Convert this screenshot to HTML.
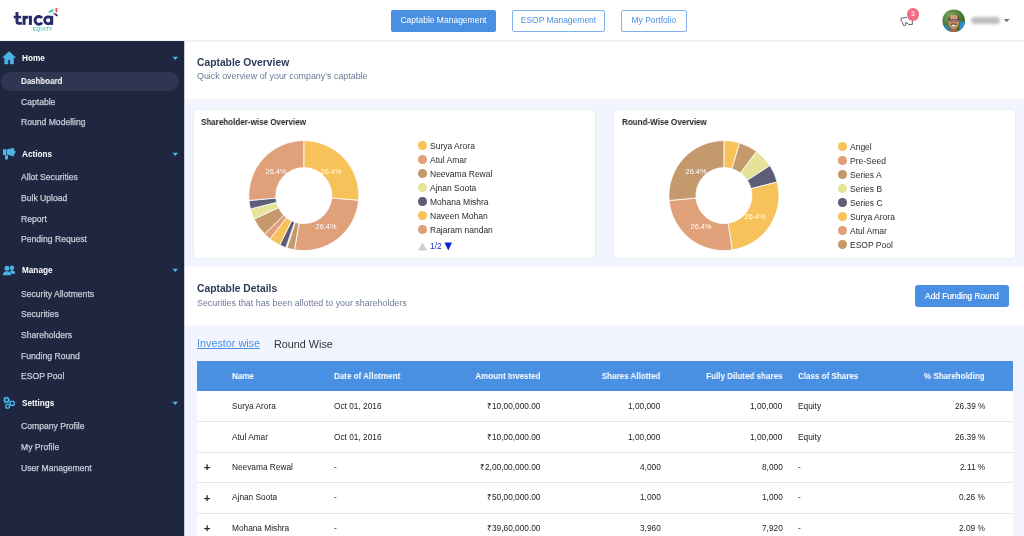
<!DOCTYPE html>
<html><head><meta charset="utf-8"><style>
html,body{margin:0;padding:0;width:1024px;height:536px;overflow:hidden;background:#fff;font-family:"Liberation Sans", sans-serif;}
.t{position:absolute;white-space:nowrap;line-height:1em;font-family:"Liberation Sans", sans-serif;will-change:transform;}
.btn{position:absolute;will-change:transform;border-radius:2px;font-size:8.5px;text-align:center;display:flex;align-items:center;justify-content:center;font-family:"Liberation Sans", sans-serif;}
</style></head><body>
<div style="position:absolute;left:0px;top:0px;width:1024px;height:40px;background:#fff;"></div><div style="position:absolute;left:0px;top:40px;width:1024px;height:2px;background:#f1f1f2;"></div><svg style="position:absolute;left:0;top:0" width="70" height="40"><g fill="none" stroke="#282a6c" stroke-width="3"><path d="M16.95,12.1 L16.95,21.6 Q16.95,23.4 18.9,23.4 L21.9,23.4" stroke-width="2.9"/><path d="M13.7,17.1 L21.1,17.1" stroke-width="2.6"/><path d="M24.05,24.9 L24.05,15.8"/><path d="M24.05,20 Q24.2,17.2 27.3,17.2 L28.4,17.2" stroke-width="2.7"/><path d="M30.4,15.8 L30.4,24.9"/><path d="M42.0,18.0 A3.9,3.9 0 1 0 42.0,22.7" stroke-width="2.9"/><circle cx="48.2" cy="20.35" r="3.55" stroke-width="2.8"/><path d="M51.75,15.8 L51.75,24.9" stroke-width="2.9"/></g><line x1="49.6" y1="11.9" x2="52.6" y2="10.3" stroke="#3fc4b3" stroke-width="2.1" stroke-linecap="round"/><line x1="56.4" y1="8.7" x2="56.4" y2="11.4" stroke="#ef5b48" stroke-width="2" stroke-linecap="round"/><line x1="54.9" y1="14.0" x2="56.7" y2="15.3" stroke="#282a6c" stroke-width="2" stroke-linecap="round"/><line x1="53.6" y1="13.3" x2="54.9" y2="14.0" stroke="#8a8cb0" stroke-width="1.6" stroke-linecap="round"/></svg><div class="t" style="left:33px;top:28.2px;font-size:4.6px;line-height:4.6px;font-weight:bold;color:#45c6b8;letter-spacing:0.45px">EQUITY</div><div class="btn" style="left:391px;top:9.7px;width:105px;height:22px;background:#4a90e2;color:#fff;border:none;padding-bottom:1.4px;box-sizing:border-box">Captable Management</div><div class="btn" style="left:512px;top:9.7px;width:93px;height:22px;background:#fff;color:#4a90e2;border:1px solid #80b1ec;padding-bottom:1.4px;box-sizing:border-box">ESOP Management</div><div class="btn" style="left:620.5px;top:9.5px;width:65.8px;height:22.2px;background:#fff;color:#4a90e2;border:1px solid #80b1ec;padding-bottom:1.4px;box-sizing:border-box">My Portfolio</div><svg style="position:absolute;left:898px;top:12px" width="22" height="18" viewBox="0 0 22 18"><path d="M3.2,9.8 L3.2,6.2 L9,5.3" fill="none" stroke="#50556b" stroke-width="0.9"/><path d="M4.4,9.8 L5.3,13.4 Q6.3,14.4 7.4,13.4 L7.7,10.4 L11,12.5 L14.3,12.6 L14.4,8.2" fill="none" stroke="#50556b" stroke-width="0.9" stroke-linejoin="round"/></svg><div style="position:absolute;left:906.6px;top:8.0px;width:12.8px;height:12.8px;border-radius:50%;background:#f06c87;color:#fff;font-size:6.8px;line-height:12.8px;text-align:center">3</div><svg style="position:absolute;left:942px;top:9px" width="24" height="24" viewBox="0 0 24 24"><defs><clipPath id="av"><circle cx="11.7" cy="11.75" r="11.3"/></clipPath><radialGradient id="gr" cx="0.35" cy="0.3" r="0.8"><stop offset="0" stop-color="#7aa85a"/><stop offset="0.5" stop-color="#4d7d38"/><stop offset="1" stop-color="#2f5a25"/></radialGradient></defs><g clip-path="url(#av)"><rect width="24" height="24" fill="url(#gr)"/><path d="M18,13 L24,12 L24,24 L17,24 Z" fill="#2e92c8"/><path d="M0,17 L6,16 L8,24 L0,24 Z" fill="#2a85b8"/><path d="M7,21 Q11.5,19 16,21 L17,24 L6,24 Z" fill="#a0684a"/><ellipse cx="11.7" cy="13" rx="5.4" ry="7.4" fill="#c48a68"/><path d="M6.4,12 Q6.2,8 7.6,6.8 L8,11 Z" fill="#3a2e28"/><path d="M17,12 Q17.2,8 15.8,6.8 L15.4,11 Z" fill="#3a2e28"/><ellipse cx="11.7" cy="9" rx="4" ry="3" fill="#d49c7a"/><path d="M7.5,10.6 L16,10.6" stroke="#5a4a5a" stroke-width="0.8"/><circle cx="9.6" cy="11.3" r="1.3" fill="#b08090" stroke="#4a3a4a" stroke-width="0.5"/><circle cx="13.9" cy="11.3" r="1.3" fill="#b08090" stroke="#4a3a4a" stroke-width="0.5"/><path d="M8.8,15.2 Q11.7,13.8 14.6,15.2 L14,16 Q11.7,15.2 9.4,16 Z" fill="#3a2a22"/><ellipse cx="11.7" cy="16.4" rx="2" ry="0.9" fill="#f2ece6"/></g></svg><div style="position:absolute;left:970.5px;top:16.5px;width:29.5px;height:7px;border-radius:4px;background:#bdbdbd;filter:blur(1.7px)"></div><svg style="position:absolute;left:1003px;top:18px" width="8" height="5"><path d="M0.8,1 L6.6,1 L3.7,4.2 Z" fill="#777"/></svg><div style="position:absolute;left:0px;top:41px;width:184px;height:495px;background:#1f2640;"></div><div style="position:absolute;left:184px;top:41px;width:1px;height:495px;background:#c9ccd6;"></div><div style="position:absolute;left:1px;top:71.5px;width:178px;height:19.5px;background:#2f3651;border-radius:10px;"></div><div class="t" style="left:21.5px;top:55.06px;font-size:8.2px;color:#fff;font-weight:bold;">Home</div><svg style="position:absolute;left:171px;top:55.5px" width="8" height="5"><path d="M1.3,0.8 L7.1,0.8 L4.2,3.9 Z" fill="#4ab6e8"/></svg><div class="t" style="left:20.8px;top:77.30px;font-size:8.5px;color:#fff;font-weight:bold;transform:scaleX(0.93);transform-origin:0 0;">Dashboard</div><div class="t" style="left:20.5px;top:98.22px;font-size:8.6px;color:#c8ccd6;font-weight:normal;-webkit-text-stroke:0.25px #c8ccd6;">Captable</div><div class="t" style="left:20.5px;top:118.47px;font-size:8.6px;color:#c8ccd6;font-weight:normal;-webkit-text-stroke:0.25px #c8ccd6;">Round Modelling</div><div class="t" style="left:21.5px;top:150.76px;font-size:8.2px;color:#fff;font-weight:bold;">Actions</div><svg style="position:absolute;left:171px;top:151.5px" width="8" height="5"><path d="M1.3,0.8 L7.1,0.8 L4.2,3.9 Z" fill="#4ab6e8"/></svg><div class="t" style="left:20.5px;top:172.72px;font-size:8.6px;color:#c8ccd6;font-weight:normal;-webkit-text-stroke:0.25px #c8ccd6;">Allot Securities</div><div class="t" style="left:20.5px;top:193.72px;font-size:8.6px;color:#c8ccd6;font-weight:normal;-webkit-text-stroke:0.25px #c8ccd6;">Bulk Upload</div><div class="t" style="left:20.5px;top:214.72px;font-size:8.6px;color:#c8ccd6;font-weight:normal;-webkit-text-stroke:0.25px #c8ccd6;">Report</div><div class="t" style="left:20.5px;top:235.22px;font-size:8.6px;color:#c8ccd6;font-weight:normal;-webkit-text-stroke:0.25px #c8ccd6;">Pending Request</div><div class="t" style="left:21.5px;top:266.56px;font-size:8.2px;color:#fff;font-weight:bold;">Manage</div><svg style="position:absolute;left:171px;top:268px" width="8" height="5"><path d="M1.3,0.8 L7.1,0.8 L4.2,3.9 Z" fill="#4ab6e8"/></svg><div class="t" style="left:20.5px;top:289.72px;font-size:8.6px;color:#c8ccd6;font-weight:normal;-webkit-text-stroke:0.25px #c8ccd6;">Security Allotments</div><div class="t" style="left:20.5px;top:310.42px;font-size:8.6px;color:#c8ccd6;font-weight:normal;-webkit-text-stroke:0.25px #c8ccd6;">Securities</div><div class="t" style="left:20.5px;top:330.92px;font-size:8.6px;color:#c8ccd6;font-weight:normal;-webkit-text-stroke:0.25px #c8ccd6;">Shareholders</div><div class="t" style="left:20.5px;top:351.92px;font-size:8.6px;color:#c8ccd6;font-weight:normal;-webkit-text-stroke:0.25px #c8ccd6;">Funding Round</div><div class="t" style="left:20.5px;top:372.32px;font-size:8.6px;color:#c8ccd6;font-weight:normal;-webkit-text-stroke:0.25px #c8ccd6;">ESOP Pool</div><div class="t" style="left:21.5px;top:399.76px;font-size:8.2px;color:#fff;font-weight:bold;">Settings</div><svg style="position:absolute;left:171px;top:400.5px" width="8" height="5"><path d="M1.3,0.8 L7.1,0.8 L4.2,3.9 Z" fill="#4ab6e8"/></svg><div class="t" style="left:20.5px;top:422.22px;font-size:8.6px;color:#c8ccd6;font-weight:normal;-webkit-text-stroke:0.25px #c8ccd6;">Company Profile</div><div class="t" style="left:20.5px;top:442.52px;font-size:8.6px;color:#c8ccd6;font-weight:normal;-webkit-text-stroke:0.25px #c8ccd6;">My Profile</div><div class="t" style="left:20.5px;top:463.52px;font-size:8.6px;color:#c8ccd6;font-weight:normal;-webkit-text-stroke:0.25px #c8ccd6;">User Management</div><svg style="position:absolute;left:0;top:45px" width="20" height="22" viewBox="0 0 20 22"><path d="M9.1,6.6 L2.6,12.6 L4.7,12.6 L4.7,18.9 L7.9,18.9 L7.9,14.7 L10.3,14.7 L10.3,18.9 L13.5,18.9 L13.5,12.6 L15.6,12.6 Z" fill="#4ab6e8" stroke="#4ab6e8" stroke-width="0.6" stroke-linejoin="round"/></svg><svg style="position:absolute;left:0;top:142px" width="20" height="22" viewBox="0 0 20 22"><path d="M3,7.2 L6,7.2 L6,13 L3,13 Z" fill="#4ab6e8"/><path d="M6.5,7.6 L14,5.8 L14,14.5 L6.5,12.6 Z" fill="#4ab6e8"/><rect x="14" y="8.6" width="1.4" height="3" rx="0.7" fill="#4ab6e8"/><path d="M5,13.2 L8,13.2 L8,17 Q6.5,18.4 5,17 Z" fill="#4ab6e8"/></svg><svg style="position:absolute;left:0;top:258px" width="20" height="22" viewBox="0 0 20 22"><circle cx="7" cy="10.3" r="2.5" fill="#4ab6e8"/><circle cx="12" cy="9.8" r="2.2" fill="#4ab6e8"/><path d="M2.8,17.3 Q3,13.3 7,13.3 Q11,13.3 11.2,17.3 Z" fill="#4ab6e8"/><path d="M11.2,15.8 L15.3,15.8 Q15,12.3 12,12.3 Q10.5,12.3 10,13" fill="#4ab6e8"/></svg><svg style="position:absolute;left:0;top:390px" width="20" height="22" viewBox="0 0 20 22"><circle cx="6.6" cy="10" r="2.6" fill="none" stroke="#4ab6e8" stroke-width="1.6" stroke-dasharray="1.2 0.6"/><circle cx="6.6" cy="10" r="1.9" fill="none" stroke="#4ab6e8" stroke-width="1.3"/><circle cx="12.2" cy="13.3" r="2.2" fill="none" stroke="#4ab6e8" stroke-width="1.4"/><circle cx="7.6" cy="16.3" r="1.9" fill="none" stroke="#4ab6e8" stroke-width="1.3"/></svg><div style="position:absolute;left:185px;top:42px;width:839px;height:494px;background:#f2f5fd;"></div><div style="position:absolute;left:185px;top:42px;width:839px;height:57px;background:#fff;"></div><div class="t" style="left:197px;top:58.18px;font-size:10.3px;color:#2c3d5b;font-weight:bold;">Captable Overview</div><div class="t" style="left:197px;top:72.47px;font-size:8.9px;color:#6c7a97;font-weight:normal;">Quick overview of your company&#8217;s captable</div><div style="position:absolute;left:193.5px;top:109.5px;width:401.5px;height:148px;background:#fff;border-radius:3px;box-shadow:0 0 2px rgba(200,205,220,0.6);"></div><div style="position:absolute;left:614px;top:109.5px;width:400.5px;height:148px;background:#fff;border-radius:3px;box-shadow:0 0 2px rgba(200,205,220,0.6);"></div><div class="t" style="left:201px;top:118.40px;font-size:8.5px;color:#262626;font-weight:bold;transform:scaleX(0.945);transform-origin:0 0;">Shareholder-wise Overview</div><div class="t" style="left:621.5px;top:118.40px;font-size:8.5px;color:#262626;font-weight:bold;transform:scaleX(0.945);transform-origin:0 0;">Round-Wise Overview</div><svg style="position:absolute;left:0;top:0" width="1024" height="536"><path d="M303.80,140.60 A55,55 0 0 1 358.59,200.39 L331.69,198.04 A28,28 0 0 0 303.80,167.60 Z" fill="#f7c25a" stroke="#fff" stroke-width="0.8"/><path d="M358.59,200.39 A55,55 0 0 1 294.44,249.80 L299.03,223.19 A28,28 0 0 0 331.69,198.04 Z" fill="#e0a07a" stroke="#fff" stroke-width="0.8"/><path d="M294.44,249.80 A55,55 0 0 1 286.90,247.94 L295.19,222.24 A28,28 0 0 0 299.03,223.19 Z" fill="#c49a6c" stroke="#fff" stroke-width="0.8"/><path d="M286.90,247.94 A55,55 0 0 1 285.89,247.60 L294.68,222.07 A28,28 0 0 0 295.19,222.24 Z" fill="#e5e39a" stroke="#fff" stroke-width="0.8"/><path d="M285.89,247.60 A55,55 0 0 1 279.78,245.08 L291.57,220.79 A28,28 0 0 0 294.68,222.07 Z" fill="#5e5d78" stroke="#fff" stroke-width="0.8"/><path d="M279.78,245.08 A55,55 0 0 1 269.94,238.94 L286.56,217.66 A28,28 0 0 0 291.57,220.79 Z" fill="#f7c25a" stroke="#fff" stroke-width="0.8"/><path d="M269.94,238.94 A55,55 0 0 1 264.50,234.08 L283.79,215.19 A28,28 0 0 0 286.56,217.66 Z" fill="#e0a07a" stroke="#fff" stroke-width="0.8"/><path d="M264.50,234.08 A55,55 0 0 1 254.08,219.10 L278.49,207.57 A28,28 0 0 0 283.79,215.19 Z" fill="#c49a6c" stroke="#fff" stroke-width="0.8"/><path d="M254.08,219.10 A55,55 0 0 1 250.43,208.91 L276.63,202.37 A28,28 0 0 0 278.49,207.57 Z" fill="#e5e39a" stroke="#fff" stroke-width="0.8"/><path d="M250.43,208.91 A55,55 0 0 1 249.02,200.49 L275.91,198.09 A28,28 0 0 0 276.63,202.37 Z" fill="#5e5d78" stroke="#fff" stroke-width="0.8"/><path d="M249.02,200.49 A55,55 0 0 1 303.80,140.60 L303.80,167.60 A28,28 0 0 0 275.91,198.09 Z" fill="#e0a07a" stroke="#fff" stroke-width="0.8"/><text x="331" y="174" fill="#fff" font-size="7.4" text-anchor="middle" font-family="Liberation Sans">26.4%</text><text x="326" y="229" fill="#fff" font-size="7.4" text-anchor="middle" font-family="Liberation Sans">26.4%</text><text x="276" y="174" fill="#fff" font-size="7.4" text-anchor="middle" font-family="Liberation Sans">26.4%</text><path d="M723.90,140.60 A55,55 0 0 1 739.61,142.89 L731.90,168.77 A28,28 0 0 0 723.90,167.60 Z" fill="#f7c25a" stroke="#fff" stroke-width="0.8"/><path d="M739.61,142.89 A55,55 0 0 1 756.62,151.39 L740.56,173.09 A28,28 0 0 0 731.90,168.77 Z" fill="#c49a6c" stroke="#fff" stroke-width="0.8"/><path d="M756.62,151.39 A55,55 0 0 1 769.97,165.56 L747.36,180.31 A28,28 0 0 0 740.56,173.09 Z" fill="#e5e39a" stroke="#fff" stroke-width="0.8"/><path d="M769.97,165.56 A55,55 0 0 1 777.20,182.02 L751.03,188.68 A28,28 0 0 0 747.36,180.31 Z" fill="#5e5d78" stroke="#fff" stroke-width="0.8"/><path d="M777.20,182.02 A55,55 0 0 1 732.31,249.95 L728.18,223.27 A28,28 0 0 0 751.03,188.68 Z" fill="#f7c25a" stroke="#fff" stroke-width="0.8"/><path d="M732.31,249.95 A55,55 0 0 1 669.12,200.49 L696.01,198.09 A28,28 0 0 0 728.18,223.27 Z" fill="#e0a07a" stroke="#fff" stroke-width="0.8"/><path d="M669.12,200.49 A55,55 0 0 1 723.90,140.60 L723.90,167.60 A28,28 0 0 0 696.01,198.09 Z" fill="#c49a6c" stroke="#fff" stroke-width="0.8"/><text x="696" y="174" fill="#fff" font-size="7.4" text-anchor="middle" font-family="Liberation Sans">26.4%</text><text x="755" y="219" fill="#fff" font-size="7.4" text-anchor="middle" font-family="Liberation Sans">26.4%</text><text x="701" y="229" fill="#fff" font-size="7.4" text-anchor="middle" font-family="Liberation Sans">26.4%</text></svg><div style="position:absolute;left:418.05px;top:141.25px;width:8.5px;height:8.5px;border-radius:50%;background:#f7c25a"></div><div class="t" style="left:430.0px;top:142.00px;font-size:8.5px;color:#2b2b2b;font-weight:normal;">Surya Arora</div><div style="position:absolute;left:418.05px;top:155.25px;width:8.5px;height:8.5px;border-radius:50%;background:#e0a07a"></div><div class="t" style="left:430.0px;top:156.00px;font-size:8.5px;color:#2b2b2b;font-weight:normal;">Atul Amar</div><div style="position:absolute;left:418.05px;top:169.25px;width:8.5px;height:8.5px;border-radius:50%;background:#c49a6c"></div><div class="t" style="left:430.0px;top:170.00px;font-size:8.5px;color:#2b2b2b;font-weight:normal;">Neevama Rewal</div><div style="position:absolute;left:418.05px;top:183.25px;width:8.5px;height:8.5px;border-radius:50%;background:#e5e39a"></div><div class="t" style="left:430.0px;top:184.00px;font-size:8.5px;color:#2b2b2b;font-weight:normal;">Ajnan Soota</div><div style="position:absolute;left:418.05px;top:197.25px;width:8.5px;height:8.5px;border-radius:50%;background:#5e5d78"></div><div class="t" style="left:430.0px;top:198.00px;font-size:8.5px;color:#2b2b2b;font-weight:normal;">Mohana Mishra</div><div style="position:absolute;left:418.05px;top:211.25px;width:8.5px;height:8.5px;border-radius:50%;background:#f7c25a"></div><div class="t" style="left:430.0px;top:212.00px;font-size:8.5px;color:#2b2b2b;font-weight:normal;">Naveen Mohan</div><div style="position:absolute;left:418.05px;top:225.25px;width:8.5px;height:8.5px;border-radius:50%;background:#e0a07a"></div><div class="t" style="left:430.0px;top:226.00px;font-size:8.5px;color:#2b2b2b;font-weight:normal;">Rajaram nandan</div><div style="position:absolute;left:838.05px;top:142.25px;width:8.5px;height:8.5px;border-radius:50%;background:#f7c25a"></div><div class="t" style="left:850.0px;top:143.00px;font-size:8.5px;color:#2b2b2b;font-weight:normal;">Angel</div><div style="position:absolute;left:838.05px;top:156.25px;width:8.5px;height:8.5px;border-radius:50%;background:#e0a07a"></div><div class="t" style="left:850.0px;top:157.00px;font-size:8.5px;color:#2b2b2b;font-weight:normal;">Pre-Seed</div><div style="position:absolute;left:838.05px;top:170.25px;width:8.5px;height:8.5px;border-radius:50%;background:#c49a6c"></div><div class="t" style="left:850.0px;top:171.00px;font-size:8.5px;color:#2b2b2b;font-weight:normal;">Series A</div><div style="position:absolute;left:838.05px;top:184.25px;width:8.5px;height:8.5px;border-radius:50%;background:#e5e39a"></div><div class="t" style="left:850.0px;top:185.00px;font-size:8.5px;color:#2b2b2b;font-weight:normal;">Series B</div><div style="position:absolute;left:838.05px;top:198.25px;width:8.5px;height:8.5px;border-radius:50%;background:#5e5d78"></div><div class="t" style="left:850.0px;top:199.00px;font-size:8.5px;color:#2b2b2b;font-weight:normal;">Series C</div><div style="position:absolute;left:838.05px;top:212.25px;width:8.5px;height:8.5px;border-radius:50%;background:#f7c25a"></div><div class="t" style="left:850.0px;top:213.00px;font-size:8.5px;color:#2b2b2b;font-weight:normal;">Surya Arora</div><div style="position:absolute;left:838.05px;top:226.25px;width:8.5px;height:8.5px;border-radius:50%;background:#e0a07a"></div><div class="t" style="left:850.0px;top:227.00px;font-size:8.5px;color:#2b2b2b;font-weight:normal;">Atul Amar</div><div style="position:absolute;left:838.05px;top:240.25px;width:8.5px;height:8.5px;border-radius:50%;background:#c49a6c"></div><div class="t" style="left:850.0px;top:241.00px;font-size:8.5px;color:#2b2b2b;font-weight:normal;">ESOP Pool</div><svg style="position:absolute;left:416px;top:240px" width="40" height="12"><path d="M2,10.5 L6.5,2.5 L11,10.5 Z" fill="#cfcfcf"/><path d="M28.5,2.5 L36,2.5 L32.25,10.5 Z" fill="#0a1fd0"/></svg><div class="t" style="left:430px;top:242.30px;font-size:8.5px;color:#1a30d0;font-weight:normal;">1/2</div><div style="position:absolute;left:185px;top:267px;width:839px;height:58px;background:#fff;"></div><div class="t" style="left:197px;top:284.38px;font-size:10.3px;color:#2c3d5b;font-weight:bold;">Captable Details</div><div class="t" style="left:197px;top:299.27px;font-size:8.9px;color:#6c7a97;font-weight:normal;">Securities that has been allotted to your shareholders</div><div class="btn" style="left:915px;top:285px;width:94px;height:22px;background:#4a90e2;color:#fff;border:none;border-radius:3px;font-size:8.3px;-webkit-text-stroke:0.2px #fff">Add Funding Round</div><div class="t" style="left:197px;top:338.36px;font-size:10.8px;color:#4a90e2;font-weight:normal;text-decoration:underline;text-underline-offset:0.6px;text-decoration-thickness:0.8px;">Investor wise</div><div class="t" style="left:273.5px;top:338.86px;font-size:10.8px;color:#333;font-weight:normal;">Round Wise</div><div style="position:absolute;left:197px;top:361px;width:816px;height:30px;background:#4a90e2;"></div><div class="t" style="left:231.5px;top:371.94px;font-size:8.7px;color:#fff;font-weight:bold;transform:scaleX(0.925);transform-origin:0 0;">Name</div><div class="t" style="left:334.3px;top:371.94px;font-size:8.7px;color:#fff;font-weight:bold;transform:scaleX(0.925);transform-origin:0 0;">Date of Allotment</div><div class="t" style="right:483.70000000000005px;top:371.94px;font-size:8.7px;color:#fff;font-weight:bold;transform:scaleX(0.925);transform-origin:100% 0;">Amount Invested</div><div class="t" style="right:363.5px;top:371.94px;font-size:8.7px;color:#fff;font-weight:bold;transform:scaleX(0.925);transform-origin:100% 0;">Shares Allotted</div><div class="t" style="right:241.39999999999998px;top:371.94px;font-size:8.7px;color:#fff;font-weight:bold;transform:scaleX(0.925);transform-origin:100% 0;">Fully Diluted shares</div><div class="t" style="left:798px;top:371.94px;font-size:8.7px;color:#fff;font-weight:bold;transform:scaleX(0.925);transform-origin:0 0;">Class of Shares</div><div class="t" style="right:38.89999999999998px;top:371.94px;font-size:8.7px;color:#fff;font-weight:bold;transform:scaleX(0.925);transform-origin:100% 0;">% Shareholding</div><div style="position:absolute;left:197px;top:391px;width:816px;height:30px;background:#fff;"></div><div class="t" style="left:231.5px;top:402.07px;font-size:8.3px;color:#222;font-weight:normal;">Surya Arora</div><div class="t" style="left:334.3px;top:402.07px;font-size:8.3px;color:#222;font-weight:normal;">Oct 01, 2016</div><div class="t" style="right:483.70000000000005px;top:402.07px;font-size:8.3px;color:#222;font-weight:normal;">&#8377;10,00,000.00</div><div class="t" style="right:363.5px;top:402.07px;font-size:8.3px;color:#222;font-weight:normal;">1,00,000</div><div class="t" style="right:241.39999999999998px;top:402.07px;font-size:8.3px;color:#222;font-weight:normal;">1,00,000</div><div class="t" style="left:798px;top:402.07px;font-size:8.3px;color:#222;font-weight:normal;">Equity</div><div class="t" style="right:38.89999999999998px;top:402.07px;font-size:8.3px;color:#222;font-weight:normal;">26.39 %</div><div style="position:absolute;left:197px;top:421px;width:816px;height:31px;background:#fff;border-top:1px solid #e6e8ec;box-sizing:border-box;"></div><div class="t" style="left:231.5px;top:432.52px;font-size:8.3px;color:#222;font-weight:normal;">Atul Amar</div><div class="t" style="left:334.3px;top:432.52px;font-size:8.3px;color:#222;font-weight:normal;">Oct 01, 2016</div><div class="t" style="right:483.70000000000005px;top:432.52px;font-size:8.3px;color:#222;font-weight:normal;">&#8377;10,00,000.00</div><div class="t" style="right:363.5px;top:432.52px;font-size:8.3px;color:#222;font-weight:normal;">1,00,000</div><div class="t" style="right:241.39999999999998px;top:432.52px;font-size:8.3px;color:#222;font-weight:normal;">1,00,000</div><div class="t" style="left:798px;top:432.52px;font-size:8.3px;color:#222;font-weight:normal;">Equity</div><div class="t" style="right:38.89999999999998px;top:432.52px;font-size:8.3px;color:#222;font-weight:normal;">26.39 %</div><div style="position:absolute;left:197px;top:452px;width:816px;height:30px;background:#fff;border-top:1px solid #e6e8ec;box-sizing:border-box;"></div><div class="t" style="left:7.400000000000006px;width:400px;text-align:center;top:462.07px;font-size:11.5px;color:#2a2a2a;font-weight:bold;">+</div><div class="t" style="left:231.5px;top:462.97px;font-size:8.3px;color:#222;font-weight:normal;">Neevama Rewal</div><div class="t" style="left:334.3px;top:462.97px;font-size:8.3px;color:#222;font-weight:normal;">-</div><div class="t" style="right:483.70000000000005px;top:462.97px;font-size:8.3px;color:#222;font-weight:normal;">&#8377;2,00,00,000.00</div><div class="t" style="right:363.5px;top:462.97px;font-size:8.3px;color:#222;font-weight:normal;">4,000</div><div class="t" style="right:241.39999999999998px;top:462.97px;font-size:8.3px;color:#222;font-weight:normal;">8,000</div><div class="t" style="left:798px;top:462.97px;font-size:8.3px;color:#222;font-weight:normal;">-</div><div class="t" style="right:38.89999999999998px;top:462.97px;font-size:8.3px;color:#222;font-weight:normal;">2.11 %</div><div style="position:absolute;left:197px;top:482px;width:816px;height:31px;background:#fff;border-top:1px solid #e6e8ec;box-sizing:border-box;"></div><div class="t" style="left:7.400000000000006px;width:400px;text-align:center;top:492.52px;font-size:11.5px;color:#2a2a2a;font-weight:bold;">+</div><div class="t" style="left:231.5px;top:493.42px;font-size:8.3px;color:#222;font-weight:normal;">Ajnan Soota</div><div class="t" style="left:334.3px;top:493.42px;font-size:8.3px;color:#222;font-weight:normal;">-</div><div class="t" style="right:483.70000000000005px;top:493.42px;font-size:8.3px;color:#222;font-weight:normal;">&#8377;50,00,000.00</div><div class="t" style="right:363.5px;top:493.42px;font-size:8.3px;color:#222;font-weight:normal;">1,000</div><div class="t" style="right:241.39999999999998px;top:493.42px;font-size:8.3px;color:#222;font-weight:normal;">1,000</div><div class="t" style="left:798px;top:493.42px;font-size:8.3px;color:#222;font-weight:normal;">-</div><div class="t" style="right:38.89999999999998px;top:493.42px;font-size:8.3px;color:#222;font-weight:normal;">0.26 %</div><div style="position:absolute;left:197px;top:513px;width:816px;height:31px;background:#fff;border-top:1px solid #e6e8ec;box-sizing:border-box;"></div><div class="t" style="left:7.400000000000006px;width:400px;text-align:center;top:522.97px;font-size:11.5px;color:#2a2a2a;font-weight:bold;">+</div><div class="t" style="left:231.5px;top:523.87px;font-size:8.3px;color:#222;font-weight:normal;">Mohana Mishra</div><div class="t" style="left:334.3px;top:523.87px;font-size:8.3px;color:#222;font-weight:normal;">-</div><div class="t" style="right:483.70000000000005px;top:523.87px;font-size:8.3px;color:#222;font-weight:normal;">&#8377;39,60,000.00</div><div class="t" style="right:363.5px;top:523.87px;font-size:8.3px;color:#222;font-weight:normal;">3,960</div><div class="t" style="right:241.39999999999998px;top:523.87px;font-size:8.3px;color:#222;font-weight:normal;">7,920</div><div class="t" style="left:798px;top:523.87px;font-size:8.3px;color:#222;font-weight:normal;">-</div><div class="t" style="right:38.89999999999998px;top:523.87px;font-size:8.3px;color:#222;font-weight:normal;">2.09 %</div>
</body></html>
